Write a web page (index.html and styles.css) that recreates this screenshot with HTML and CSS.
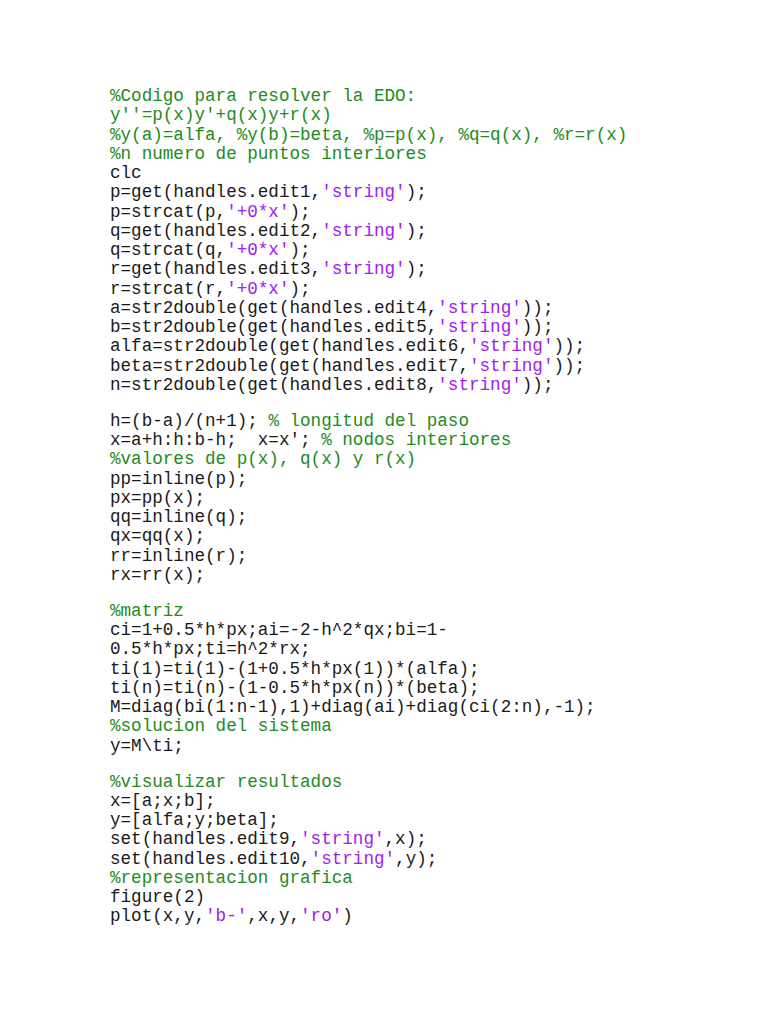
FILE: index.html
```html
<!DOCTYPE html>
<html lang="es">
<head>
<meta charset="utf-8">
<title>Codigo EDO</title>
<link rel="stylesheet" href="styles.css">
</head>
<body>
<main class="page">
<pre class="code"><span class="c">%Codigo para resolver la EDO:</span>
<span class="c">y''=p(x)y'+q(x)y+r(x)</span>
<span class="c">%y(a)=alfa, %y(b)=beta, %p=p(x), %q=q(x), %r=r(x)</span>
<span class="c">%n numero de puntos interiores</span>
clc
p=get(handles.edit1,<span class="s">'string'</span>);
p=strcat(p,<span class="s">'+0*x'</span>);
q=get(handles.edit2,<span class="s">'string'</span>);
q=strcat(q,<span class="s">'+0*x'</span>);
r=get(handles.edit3,<span class="s">'string'</span>);
r=strcat(r,<span class="s">'+0*x'</span>);
a=str2double(get(handles.edit4,<span class="s">'string'</span>));
b=str2double(get(handles.edit5,<span class="s">'string'</span>));
alfa=str2double(get(handles.edit6,<span class="s">'string'</span>));
beta=str2double(get(handles.edit7,<span class="s">'string'</span>));
n=str2double(get(handles.edit8,<span class="s">'string'</span>));</pre>
<pre class="code">h=(b-a)/(n+1); <span class="c">% longitud del paso</span>
x=a+h:h:b-h;  x=x'; <span class="c">% nodos interiores</span>
<span class="c">%valores de p(x), q(x) y r(x)</span>
pp=inline(p);
px=pp(x);
qq=inline(q);
qx=qq(x);
rr=inline(r);
rx=rr(x);</pre>
<pre class="code"><span class="c">%matriz</span>
ci=1+0.5*h*px;ai=-2-h^2*qx;bi=1-
0.5*h*px;ti=h^2*rx;
ti(1)=ti(1)-(1+0.5*h*px(1))*(alfa);
ti(n)=ti(n)-(1-0.5*h*px(n))*(beta);
M=diag(bi(1:n-1),1)+diag(ai)+diag(ci(2:n),-1);
<span class="c">%solucion del sistema</span>
y=M\ti;</pre>
<pre class="code"><span class="c">%visualizar resultados</span>
x=[a;x;b];
y=[alfa;y;beta];
set(handles.edit9,<span class="s">'string'</span>,x);
set(handles.edit10,<span class="s">'string'</span>,y);
<span class="c">%representacion grafica</span>
figure(2)
plot(x,y,<span class="s">'b-'</span>,x,y,<span class="s">'ro'</span>)</pre>
</main>
</body>
</html>
```
FILE: styles.css
```css
html, body {
  margin: 0;
  padding: 0;
  background: #ffffff;
}
.page {
  padding: 87px 0 0 110px;
  display: flex;
  flex-direction: column;
  gap: 16.75px;
}
.code {
  margin: 0;
  font-family: "Liberation Mono", "Courier New", monospace;
  font-size: 17.6px;
  line-height: 19.25px;
  color: #1a1a1a;
  white-space: pre;
}
.c {
  color: #228b22;
}
.s {
  color: #a020f0;
}
```
